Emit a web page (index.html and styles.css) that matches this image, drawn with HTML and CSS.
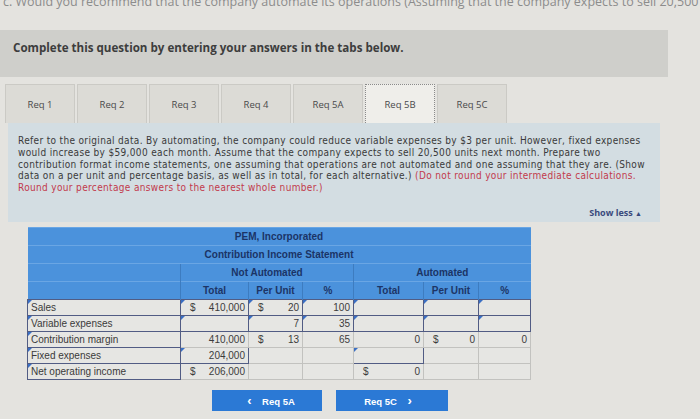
FILE: index.html
```html
<!DOCTYPE html>
<html>
<head>
<meta charset="utf-8">
<link rel="stylesheet" href="styles.css">
</head>
<body>
<div class="question">c. Would you recommend that the company automate its operations (Assuming that the company expects to sell 20,500 units)?</div>
<div class="instruct">Complete this question by entering your answers in the tabs below.</div>
<div class="tabs">
  <div class="tab">Req 1</div>
  <div class="tab">Req 2</div>
  <div class="tab">Req 3</div>
  <div class="tab">Req 4</div>
  <div class="tab">Req 5A</div>
  <div class="tab active">Req 5B</div>
  <div class="tab">Req 5C</div>
</div>
<div class="panel">
  <p class="prompt">Refer to the original data. By automating, the company could reduce variable expenses by $3 per unit. However, fixed expenses<br>would increase by $59,000 each month. Assume that the company expects to sell 20,500 units next month. Prepare two<br>contribution format income statements, one assuming that operations are not automated and one assuming that they are. (Show<br>data on a per unit and percentage basis, as well as in total, for each alternative.) <span class="red">(Do not round your intermediate calculations.<br>Round your percentage answers to the nearest whole number.)</span></p>
  <div class="showless">Show less <span class="tri">&#9650;</span></div>
</div>
<table class="stmt">
  <colgroup>
    <col class="c-label"><col class="c-tot"><col class="c-pu"><col class="c-pct"><col class="c-tot2"><col class="c-pu2"><col class="c-pct2">
  </colgroup>
  <tr class="h"><th colspan="7">PEM, Incorporated</th></tr>
  <tr class="h"><th colspan="7">Contribution Income Statement</th></tr>
  <tr class="h"><th class="blank"></th><th colspan="3" class="grp">Not Automated</th><th colspan="3" class="grp">Automated</th></tr>
  <tr class="h sub"><th class="blank"></th><th class="cell">Total</th><th class="cell">Per Unit</th><th class="cell">%</th><th class="cell">Total</th><th class="cell">Per Unit</th><th class="cell">%</th></tr>
  <tr class="d">
    <td class="in lbl">Sales</td>
    <td class="in"><span class="cur">$</span><span class="val">410,000</span></td>
    <td class="in"><span class="cur">$</span><span class="val">20</span></td>
    <td class="in"><span class="val">100</span></td>
    <td class="in"></td><td class="in"></td><td class="in"></td>
  </tr>
  <tr class="d">
    <td class="in lbl">Variable expenses</td>
    <td class="in"></td>
    <td class="in"><span class="val">7</span></td>
    <td class="in"><span class="val">35</span></td>
    <td class="in"></td><td class="in"></td><td class="in"></td>
  </tr>
  <tr class="d">
    <td class="in lbl">Contribution margin</td>
    <td class="cp"><span class="val">410,000</span></td>
    <td class="cp"><span class="cur">$</span><span class="val">13</span></td>
    <td class="cp"><span class="val">65</span></td>
    <td class="cp"><span class="val">0</span></td>
    <td class="cp"><span class="cur">$</span><span class="val">0</span></td>
    <td class="cp"><span class="val">0</span></td>
  </tr>
  <tr class="d">
    <td class="in lbl">Fixed expenses</td>
    <td class="in"><span class="val">204,000</span></td>
    <td class="cp"></td><td class="cp"></td>
    <td class="in"></td>
    <td class="cp"></td><td class="cp"></td>
  </tr>
  <tr class="d">
    <td class="in lbl">Net operating income</td>
    <td class="cp"><span class="cur">$</span><span class="val">206,000</span></td>
    <td class="cp"></td><td class="cp"></td>
    <td class="cp"><span class="cur">$</span><span class="val">0</span></td>
    <td class="cp"></td><td class="cp"></td>
  </tr>
</table>
<div class="nav">
  <button class="btn prev"><span class="chev">&lsaquo;</span> Req 5A</button>
  <button class="btn next">Req 5C <span class="chev">&rsaquo;</span></button>
</div>
</body>
</html>
```

FILE: styles.css
```css
html, body {
  margin: 0;
  padding: 0;
}
body {
  width: 700px;
  height: 419px;
  overflow: hidden;
  background: #e4e3df;
  font-family: "Open Sans", "Liberation Sans", sans-serif;
  color: #3b3b3b;
}
.question {
  margin-top: -6px;
  padding-left: 3px;
  font-size: 12.5px;
  line-height: 16px;
  color: #8c8c8c;
  white-space: nowrap;
}
.instruct {
  margin-top: 20px;
  width: 668px;
  height: 47px;
  box-sizing: border-box;
  padding: 10px 0 0 13px;
  background: #cfcfcb;
  font-weight: 700;
  font-size: 11.6px;
  color: #3d3d3d;
}
.tabs {
  display: flex;
  margin: 7px 0 0 5px;
  height: 39px;
}
.tab {
  width: 70px;
  height: 39px;
  box-sizing: border-box;
  margin-right: 2px;
  background: #dcdbd6;
  border: 1px solid #cbcac5;
  border-bottom: none;
  display: flex;
  align-items: center;
  justify-content: center;
  font-size: 9.5px;
  color: #4a4a4a;
}
.tab.active {
  background: #efeeea;
  border: 1.5px dotted #8a8a8a;
  border-bottom: none;
}
.panel {
  margin-left: 8px;
  width: 652px;
  height: 99px;
  box-sizing: border-box;
  padding: 12px 0 0 10px;
  background: #d3dde2;
}
.prompt {
  margin: 0;
  font-family: "DejaVu Sans Condensed", "DejaVu Sans", sans-serif;
  font-stretch: condensed;
  font-size: 10px;
  line-height: 11.8px;
  letter-spacing: 0.34px;
  color: #3a3a3a;
  white-space: nowrap;
}
.red {
  color: #c23a4c;
}
.showless {
  margin: 12px 18px 0 0;
  text-align: right;
  font-size: 9px;
  font-weight: 700;
  color: #3a4a7c;
}
.tri {
  font-size: 7px;
}
.stmt {
  margin: 5px 0 0 27px;
  border-collapse: collapse;
  table-layout: fixed;
  width: 503px;
  font-family: "Liberation Sans", Arial, sans-serif;
  font-size: 9.5px;
}
.c-label { width: 153px; }
.c-tot { width: 68px; }
.c-pu { width: 54px; }
.c-pct { width: 51px; }
.c-tot2 { width: 70px; }
.c-pu2 { width: 55px; }
.c-pct2 { width: 52px; }
.h th {
  height: 17px;
  padding: 0;
  background: #4b92dc;
  color: #1b3466;
  font-weight: 700;
  font-size: 10px;
  text-align: center;
  border-top: 1px solid #6aa6e4;
}
.h th.grp {
  border-left: 1px solid #3d7cc0;
}
.h.sub th {
  color: #1d3566;
  font-size: 10px;
}
.h.sub th.cell {
  border-left: 1px solid #3d7cc0;
}
.d td {
  height: 15px;
  padding: 0 3px 0 5px;
  background: #e6e6e3;
  border: 1px solid #c2c2bf;
  position: relative;
  color: #3c3c3c;
  white-space: nowrap;
  font-size: 10px;
}
.d td.in {
  border: 1px solid #515c84;
  border-top-width: 1.5px;
  border-bottom-width: 1.5px;
}
.d td.in::before {
  content: "";
  position: absolute;
  left: 0;
  top: 0;
  border-top: 4px solid #3a6fc4;
  border-right: 4px solid transparent;
}
.d td.lbl {
  padding-left: 3px;
  color: #3a3a3a;
}
.cur {
  float: left;
  margin-left: 4px;
}
.val {
  float: right;
}
.nav {
  display: flex;
  margin: 10px 0 0 212px;
  gap: 14px;
}
.btn {
  width: 110px;
  height: 21px;
  border: none;
  background: #2b79d5;
  color: #ffffff;
  font-family: "Liberation Sans", Arial, sans-serif;
  font-weight: 700;
  font-size: 9.5px;
  padding: 0;
}
.next {
  width: 112px;
}
.chev {
  font-size: 13px;
  margin: 0 8px;
}
```
